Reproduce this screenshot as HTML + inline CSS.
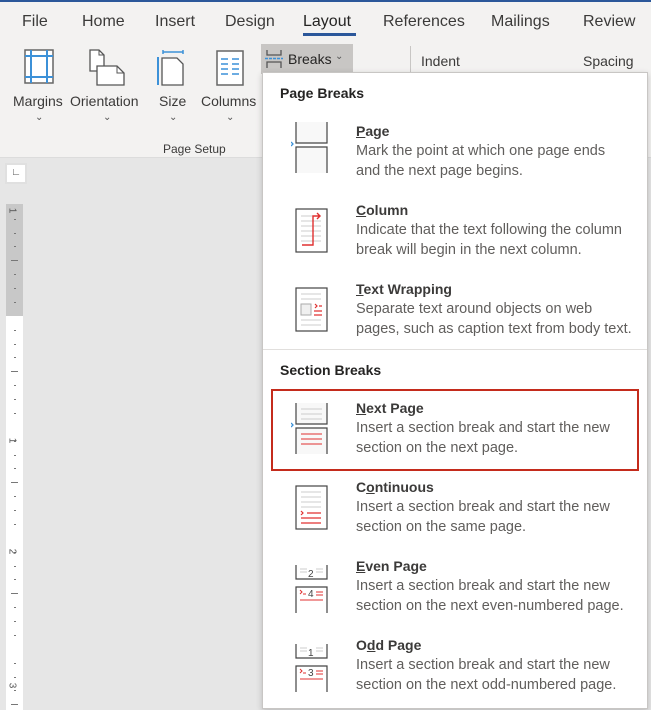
<!DOCTYPE html>
<html><head><meta charset="utf-8"><style>
*{margin:0;padding:0;box-sizing:border-box}
body{width:651px;height:710px;overflow:hidden;background:#e6e6e6;font-family:"Liberation Sans",sans-serif;position:relative;color:#252423}
.rib{position:absolute;left:0;top:0;width:651px;height:158px;background:#f3f2f1;border-top:2px solid #2b579a;border-bottom:1px solid #dcdcdc}
.t{position:absolute;font-size:16px;color:#3b3a39;top:11px}
.lbl{position:absolute;font-size:14px;color:#3b3a39}
.chev{position:absolute;font-size:10px;color:#555}
.menu{position:absolute;left:262px;top:72px;width:386px;height:637px;background:#fff;border:1px solid #c8c6c4;box-shadow:0 2px 6px rgba(0,0,0,.2)}
.h{position:absolute;left:17px;font-size:14px;font-weight:bold;color:#252423}
.it{position:absolute;left:93px;font-size:14.5px;white-space:nowrap}
.it b{display:block;color:#3b3a39;line-height:20px;font-size:14px}
.it span{display:block;color:#605e5c;line-height:20px}
.ic{position:absolute;left:28px}
.tk{position:absolute;left:14px;width:2px;height:1px;background:#777}
.tl{position:absolute;left:11px;width:7px;height:1px;background:#777}
</style></head><body>
<div class="rib">
<div class="t" style="left:22px">File</div>
<div class="t" style="left:82px">Home</div>
<div class="t" style="left:155px">Insert</div>
<div class="t" style="left:225px">Design</div>
<div class="t" style="left:303px;color:#252423">Layout</div>
<div style="position:absolute;left:303px;top:31px;width:53px;height:3px;background:#2b579a"></div>
<div class="t" style="left:383px">References</div>
<div class="t" style="left:491px">Mailings</div>
<div class="t" style="left:583px">Review</div>
<svg style="position:absolute;left:24px;top:47px" width="31" height="36"><rect x="1" y="1" width="28" height="33" fill="#fff" stroke="#666" stroke-width="1.5"/><path d="M1 7H29M1 28H29M7 1V34M23 1V34" stroke="#3c91d8" stroke-width="2"/></svg>
<svg style="position:absolute;left:88px;top:47px" width="40" height="38"><path d="M2 1H11L16 6V22H2Z" fill="#fff" stroke="#555" stroke-width="1.3"/><path d="M11 1V6H16" fill="none" stroke="#555"/><path d="M9 17H29L36 24V36H9Z" fill="#fff" stroke="#555" stroke-width="1.3"/><path d="M29 17V24H36" fill="none" stroke="#555"/></svg>
<svg style="position:absolute;left:155px;top:47px" width="32" height="38"><path d="M8 3H28M8 1V5M28 1V5" stroke="#3c91d8" stroke-width="1.5"/><path d="M3 8V36" stroke="#3c91d8" stroke-width="2"/><path d="M7 9H22L28 15V36H7Z" fill="#fff" stroke="#555" stroke-width="1.3"/></svg>
<svg style="position:absolute;left:216px;top:48px" width="28" height="36"><rect x="1" y="1" width="26" height="34" fill="#fff" stroke="#666" stroke-width="1.5"/><path d="M5 9H12M16 9H23M5 14H12M16 14H23M5 19H12M16 19H23M5 24H12M16 24H23" stroke="#3c91d8" stroke-width="1.5"/></svg>
<div class="lbl" style="left:13px;top:91px">Margins</div>
<div class="lbl" style="left:70px;top:91px">Orientation</div>
<div class="lbl" style="left:159px;top:91px">Size</div>
<div class="lbl" style="left:201px;top:91px">Columns</div>
<div class="chev" style="left:35px;top:110px">⌄</div>
<div class="chev" style="left:103px;top:110px">⌄</div>
<div class="chev" style="left:169px;top:110px">⌄</div>
<div class="chev" style="left:226px;top:110px">⌄</div>
<div style="position:absolute;left:163px;top:140px;font-size:12px;color:#3b3a39">Page Setup</div>
<div style="position:absolute;left:261px;top:42px;width:92px;height:30px;background:#c8c6c4"></div>
<svg style="position:absolute;left:264px;top:47px" width="20" height="20"><path d="M3 1V6H17V1M3 19V13H17V19" fill="none" stroke="#555" stroke-width="1.3"/><path d="M1 9.5H19" stroke="#3c91d8" stroke-width="1.5" stroke-dasharray="3 1"/></svg>
<div class="lbl" style="left:288px;top:49px;color:#252423">Breaks</div>
<div class="chev" style="left:335px;top:49px">⌄</div>
<div style="position:absolute;left:410px;top:44px;width:1px;height:30px;background:#c8c6c4"></div>
<div class="lbl" style="left:421px;top:51px">Indent</div>
<div class="lbl" style="left:583px;top:51px">Spacing</div>
</div>
<div style="position:absolute;left:5px;top:163px;width:22px;height:21px;background:#fff;border:2px solid #e0e0e0;font-size:10px;font-weight:bold;color:#555;text-align:center;line-height:16px">∟</div>
<div style="position:absolute;left:6px;top:204px;width:17px;height:506px;background:#fff"></div>
<div style="position:absolute;left:6px;top:204px;width:17px;height:112px;background:#c8c8c8"></div>
<div class="tk" style="top:219px"></div><div class="tk" style="top:233px"></div><div class="tk" style="top:246px"></div><div class="tl" style="top:260px"></div><div class="tk" style="top:274px"></div><div class="tk" style="top:288px"></div><div class="tk" style="top:302px"></div>
<div class="tk" style="top:330px"></div><div class="tk" style="top:344px"></div><div class="tk" style="top:357px"></div><div class="tl" style="top:371px"></div><div class="tk" style="top:385px"></div><div class="tk" style="top:399px"></div><div class="tk" style="top:413px"></div>
<div class="tk" style="top:441px"></div><div class="tk" style="top:455px"></div><div class="tk" style="top:468px"></div><div class="tl" style="top:482px"></div><div class="tk" style="top:496px"></div><div class="tk" style="top:510px"></div><div class="tk" style="top:524px"></div>
<div class="tk" style="top:552px"></div><div class="tk" style="top:566px"></div><div class="tk" style="top:579px"></div><div class="tl" style="top:593px"></div><div class="tk" style="top:607px"></div><div class="tk" style="top:621px"></div><div class="tk" style="top:635px"></div><div class="tk" style="top:663px"></div><div class="tk" style="top:677px"></div><div class="tk" style="top:690px"></div><div class="tl" style="top:704px"></div>
<div style="position:absolute;left:9px;top:205px;font-size:10px;color:#555;transform:rotate(90deg)">1</div>
<div style="position:absolute;left:9px;top:435px;font-size:10px;color:#555;transform:rotate(90deg)">1</div>
<div style="position:absolute;left:9px;top:546px;font-size:10px;color:#555;transform:rotate(90deg)">2</div>
<div style="position:absolute;left:9px;top:680px;font-size:10px;color:#555;transform:rotate(90deg)">3</div>
<div class="menu">
<div class="h" style="top:12px">Page Breaks</div>
<svg class="ic" style="top:49px" width="40" height="52"><rect x="5" y="0" width="31" height="21" fill="#f8f8f8"/><rect x="5" y="25" width="31" height="26" fill="#f8f8f8"/><path d="M5 0V21H36V0M5 51V25H36V51" fill="none" stroke="#444" stroke-width="1.2"/><path d="M0 20L2 22L0 24" fill="none" stroke="#3c91d8" stroke-width="1.3"/></svg>
<div class="it" style="top:48px"><b><u>P</u>age</b><span>Mark the point at which one page ends</span><span>and the next page begins.</span></div>
<svg class="ic" style="top:135px" width="40" height="46"><rect x="5" y="1" width="31" height="43" fill="#fff" stroke="#444" stroke-width="1.2"/><path d="M10 8H30M10 13H30M10 18H30M10 23H30M10 28H30M10 33H30" stroke="#ccc"/><path d="M11 37H22V8H29M26 5L29 8L26 11" fill="none" stroke="#e03030" stroke-width="1.4"/></svg>
<div class="it" style="top:127px"><b><u>C</u>olumn</b><span>Indicate that the text following the column</span><span>break will begin in the next column.</span></div>
<svg class="ic" style="top:214px" width="40" height="46"><rect x="5" y="1" width="31" height="43" fill="#fff" stroke="#444" stroke-width="1.2"/><path d="M10 7H30M10 12H30M10 33H30M10 38H30" stroke="#ccc"/><rect x="10" y="17" width="10" height="11" fill="#f0f0f0" stroke="#aaa"/><path d="M24 17L26 19L24 21M28 19H31M23 24H31M23 28H31" fill="none" stroke="#e03030" stroke-width="1.2"/></svg>
<div class="it" style="top:206px"><b><u>T</u>ext Wrapping</b><span>Separate text around objects on web</span><span>pages, such as caption text from body text.</span></div>
<div style="position:absolute;left:0;top:276px;width:384px;height:1px;background:#e1dfdd"></div>
<div class="h" style="top:289px">Section Breaks</div>
<div style="position:absolute;left:8px;top:316px;width:368px;height:82px;border:2px solid #c42b1c"></div>
<svg class="ic" style="top:330px" width="40" height="52"><rect x="5" y="0" width="31" height="21" fill="#f8f8f8"/><rect x="5" y="25" width="31" height="26" fill="#f8f8f8"/><path d="M5 0V21H36V0M5 51V25H36V51" fill="none" stroke="#444" stroke-width="1.2"/><path d="M10 6H31M10 11H31M10 16H31" stroke="#ccc"/><path d="M10 31H31M10 36H31M10 41H31" stroke="#e03030"/><path d="M0 20L2 22L0 24" fill="none" stroke="#3c91d8" stroke-width="1.3"/></svg>
<div class="it" style="top:325px"><b><u>N</u>ext Page</b><span>Insert a section break and start the new</span><span>section on the next page.</span></div>
<svg class="ic" style="top:412px" width="40" height="46"><rect x="5" y="1" width="31" height="43" fill="#fff" stroke="#444" stroke-width="1.2"/><path d="M10 7H30M10 12H30M10 17H30M10 22H30" stroke="#ccc"/><path d="M10 26L12 28L10 30M16 28H30M10 33H30M10 38H30" fill="none" stroke="#e03030" stroke-width="1.2"/></svg>
<div class="it" style="top:404px"><b>C<u>o</u>ntinuous</b><span>Insert a section break and start the new</span><span>section on the same page.</span></div>
<svg class="ic" style="top:492px" width="40" height="48"><path d="M5 0V14H36V0M5 48V22H36V48" fill="none" stroke="#444" stroke-width="1.2"/><path d="M9 7H16M25 7H32M9 4H16M25 4H32" stroke="#ccc"/><text x="17" y="12" font-size="10" fill="#444" font-family="Liberation Sans">2</text><text x="17" y="32" font-size="10" fill="#444" font-family="Liberation Sans">4</text><path d="M9 25L11 27L9 29M12 29H15M25 27H32M25 30H32M9 35H32" fill="none" stroke="#e03030"/></svg>
<div class="it" style="top:483px"><b><u>E</u>ven Page</b><span>Insert a section break and start the new</span><span>section on the next even-numbered page.</span></div>
<svg class="ic" style="top:571px" width="40" height="48"><path d="M5 0V14H36V0M5 48V22H36V48" fill="none" stroke="#444" stroke-width="1.2"/><path d="M9 7H16M25 7H32M9 4H16M25 4H32" stroke="#ccc"/><text x="17" y="12" font-size="10" fill="#444" font-family="Liberation Sans">1</text><text x="17" y="32" font-size="10" fill="#444" font-family="Liberation Sans">3</text><path d="M9 25L11 27L9 29M12 29H15M25 27H32M25 30H32M9 35H32" fill="none" stroke="#e03030"/></svg>
<div class="it" style="top:562px"><b>O<u>d</u>d Page</b><span>Insert a section break and start the new</span><span>section on the next odd-numbered page.</span></div>
</div>
</body></html>
